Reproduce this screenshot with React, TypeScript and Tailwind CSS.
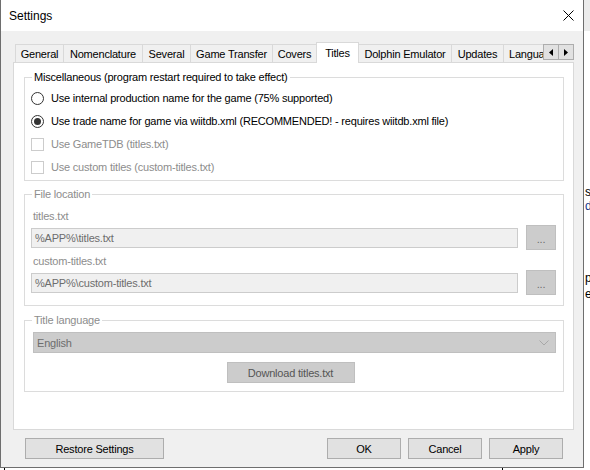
import React from 'react';

const tabs = [
  { label: 'General', w: 'w-[48px]' },
  { label: 'Nomenclature', w: 'w-[79px]' },
  { label: 'Several', w: 'w-[48px]' },
  { label: 'Game Transfer', w: 'w-[82px]' },
  { label: 'Covers', w: 'w-[44px]' },
];

const tabsAfter = [
  { label: 'Updates', w: 'w-[52px]' },
];

const Radio = ({ checked, label }: { checked?: boolean; label: string }) => (
  <div className="h-[22px] flex items-center gap-[7px]">
    <span className="w-[13px] h-[13px] rounded-full border border-[#333333] bg-white flex items-center justify-center">
      {checked && <span className="w-[7px] h-[7px] rounded-full bg-[#333333]" />}
    </span>
    <span>{label}</span>
  </div>
);

const Check = ({ label }: { label: string }) => (
  <div className="h-[22px] flex items-center gap-[7px] text-[#8d8d8d]">
    <span className="w-[13px] h-[13px] border border-[#cccccc] bg-white" />
    <span>{label}</span>
  </div>
);

const PathRow = ({ value }: { value: string }) => (
  <div className="flex items-center gap-[8px] h-[25px] mt-[2px]">
    <div className="w-[487px] h-[20px] border border-[#cccccc] bg-[#f0f0f0] text-[#6d6d6d] pl-[3px] flex items-center">
      {value}
    </div>
    <button className="w-[30px] h-[25px] border border-[#bfbfbf] bg-[#cccccc] text-[#6d6d6d] leading-none pt-[4px]">
      ...
    </button>
  </div>
);

const WinButton = ({ children, w }: { children: React.ReactNode; w: string }) => (
  <button className={`${w} h-[21px] border border-[#adadad] bg-[#e1e1e1] text-black`}>{children}</button>
);

export default function App() {
  return (
    <div className="w-[590px] h-[470px] bg-white flex flex-col overflow-hidden text-[11px] tracking-[-0.2px] leading-[14px] text-black font-['Liberation_Sans',Arial,sans-serif]">
      <div className="flex h-[468px]">
        {/* dialog window */}
        <div className="w-[584px] h-[468px] flex flex-col border-x border-b border-[#6e6e6e] bg-[#f0f0f0]">
          <div className="h-[31px] bg-white flex items-center justify-between pl-[8px] pr-[9px]">
            <span className="text-[12px] tracking-normal">Settings</span>
            <svg width="11" height="11" viewBox="0 0 11 11">
              <path d="M0.5 0.5 L10.5 10.5 M10.5 0.5 L0.5 10.5" stroke="#000" strokeWidth="1" />
            </svg>
          </div>

          <div className="flex-1 flex flex-col pt-[11px] pl-[12px] pr-[9px]">
            {/* tab strip */}
            <div className="h-[20px] flex items-end pl-[2px]">
              {tabs.map((t) => (
                <div key={t.label} className={`${t.w} h-[18px] border-t border-l border-[#d9d9d9] bg-[#f0f0f0] flex items-center justify-center pt-[1px]`}>
                  {t.label}
                </div>
              ))}
              <div className="relative z-10 w-[43px] h-[21px] -mb-px border-x border-t border-[#d9d9d9] bg-white flex justify-center pt-[3px]">
                Titles
              </div>
              <div className="w-[92px] h-[18px] border-t border-[#d9d9d9] bg-[#f0f0f0] flex items-center justify-center pt-[1px] whitespace-nowrap">
                Dolphin Emulator
              </div>
              {tabsAfter.map((t) => (
                <div key={t.label} className={`${t.w} h-[18px] border-t border-l border-[#d9d9d9] bg-[#f0f0f0] flex items-center justify-center pt-[1px]`}>
                  {t.label}
                </div>
              ))}
              <div className="w-[40px] h-[18px] border-t border-l border-[#d9d9d9] bg-[#f0f0f0] flex items-center pl-[5px] pt-[1px] overflow-hidden whitespace-nowrap">
                Langua
              </div>
              <div className="self-start mt-[2px] flex h-[16px]">
                <div className="w-[16px] h-[16px] border border-[#adadad] bg-[#e1e1e1] flex items-center justify-center">
                  <svg width="4" height="7" viewBox="0 0 4 7"><path d="M4 0 L0 3.5 L4 7 Z" fill="#000" /></svg>
                </div>
                <div className="w-[16px] h-[16px] -ml-px border border-[#adadad] bg-[#e1e1e1] flex items-center justify-center">
                  <svg width="4" height="7" viewBox="0 0 4 7"><path d="M0 0 L4 3.5 L0 7 Z" fill="#000" /></svg>
                </div>
              </div>
            </div>

            {/* tab page */}
            <div className="h-[368px] border border-[#d9d9d9] bg-white pt-[7px] pl-[10px] pr-[9px]">
              <fieldset className="border border-[#dcdcdc] pl-[6px] pb-[2px]">
                <legend className="ml-[1px] px-[2px]">Miscellaneous (program restart required to take effect)</legend>
                <div className="mt-[3px] flex flex-col gap-[1px]">
                  <Radio label="Use internal production name for the game (75% supported)" />
                  <Radio checked label="Use trade name for game via wiitdb.xml (RECOMMENDED! - requires wiitdb.xml file)" />
                  <Check label="Use GameTDB (titles.txt)" />
                  <Check label="Use custom titles (custom-titles.txt)" />
                </div>
              </fieldset>

              <fieldset className="mt-[6px] border border-[#dcdcdc] pl-[6px] pb-[10px]">
                <legend className="ml-[1px] px-[2px] text-[#8d8d8d]">File location</legend>
                <div className="mt-[8px] pl-[2px] text-[#8d8d8d]">titles.txt</div>
                <PathRow value="%APP%\titles.txt" />
                <div className="mt-[4px] pl-[2px] text-[#8d8d8d]">custom-titles.txt</div>
                <PathRow value="%APP%\custom-titles.txt" />
              </fieldset>

              <fieldset className="mt-[7px] border border-[#dcdcdc] pl-[8px] pb-[8px]">
                <legend className="ml-[-1px] px-[2px] text-[#8d8d8d]">Title language</legend>
                <div className="mt-[5px] w-[523px] h-[21px] border border-[#bfbfbf] bg-[#cccccc] text-[#6d6d6d] flex items-center justify-between pl-[3px] pr-[6px]">
                  <span>English</span>
                  <svg width="10" height="6" viewBox="0 0 10 6">
                    <path d="M0.5 0.5 L5 5 L9.5 0.5" fill="none" stroke="#a8a8a8" strokeWidth="1" />
                  </svg>
                </div>
                <div className="mt-[9px] flex justify-center pr-[15px]">
                  <button className="w-[128px] h-[21px] border border-[#bfbfbf] bg-[#cccccc] text-[#555555]">
                    Download titles.txt
                  </button>
                </div>
              </fieldset>
            </div>

            {/* dialog buttons */}
            <div className="mt-[8px] flex items-center pl-[12px] pr-[11px]">
              <WinButton w="w-[139px]">Restore Settings</WinButton>
              <div className="flex-1" />
              <div className="flex gap-[7px]">
                <WinButton w="w-[74px]">OK</WinButton>
                <WinButton w="w-[74px]">Cancel</WinButton>
                <WinButton w="w-[74px]">Apply</WinButton>
              </div>
            </div>
          </div>
        </div>

        {/* edge of the window behind */}
        <div className="flex-1 flex flex-col overflow-hidden whitespace-nowrap text-[12px]">
          <div className="h-[31px] bg-[#ececec]" />
          <div className="flex-1 bg-white pl-px">
            <div className="mt-[154px]">st</div>
            <div className="text-[#1a3a8a]">d</div>
            <div className="mt-[58px]">pa</div>
            <div className="mt-[2px]">e:</div>
          </div>
        </div>
      </div>
      <div className="h-[2px] flex pl-[4px]">
        <div className="w-px bg-black" />
        <div className="w-[497px]" />
        <div className="w-px bg-black" />
      </div>
    </div>
  );
}
